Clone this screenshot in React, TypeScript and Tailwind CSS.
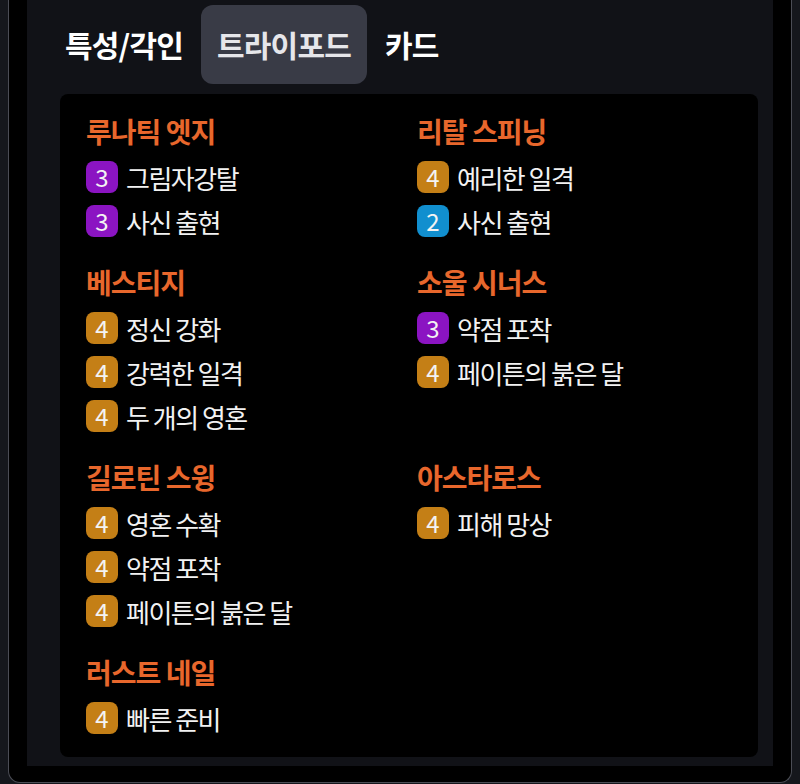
import React from "react";

type Tripod = { level: number; name: string };
type Skill = { name: string; tripods: Tripod[] };

const skills: Skill[] = [
  { name: "루나틱 엣지", tripods: [{ level: 3, name: "그림자강탈" }, { level: 3, name: "사신 출현" }] },
  { name: "리탈 스피닝", tripods: [{ level: 4, name: "예리한 일격" }, { level: 2, name: "사신 출현" }] },
  {
    name: "베스티지",
    tripods: [
      { level: 4, name: "정신 강화" },
      { level: 4, name: "강력한 일격" },
      { level: 4, name: "두 개의 영혼" },
    ],
  },
  { name: "소울 시너스", tripods: [{ level: 3, name: "약점 포착" }, { level: 4, name: "페이튼의 붉은 달" }] },
  {
    name: "길로틴 스윙",
    tripods: [
      { level: 4, name: "영혼 수확" },
      { level: 4, name: "약점 포착" },
      { level: 4, name: "페이튼의 붉은 달" },
    ],
  },
  { name: "아스타로스", tripods: [{ level: 4, name: "피해 망상" }] },
  { name: "러스트 네일", tripods: [{ level: 4, name: "빠른 준비" }] },
];

const levelColor: Record<number, string> = {
  2: "bg-[#118fcf]",
  3: "bg-[#8b14c2]",
  4: "bg-[#c47f16]",
};

const tabs = ["특성/각인", "트라이포드", "카드"];

const SkillBlock = ({ skill }: { skill: Skill }) => (
  <div>
    <h3 className="h-9 mb-[6px] flex items-center text-[28px] font-bold tracking-[-1px] text-[#e8672c]">
      {skill.name}
    </h3>
    {skill.tripods.map((t, i) => (
      <div key={i} className="h-11 flex items-center">
        <span
          className={`${levelColor[t.level]} w-8 h-8 shrink-0 rounded-lg flex items-center justify-center text-[24px] text-[#f3f3f3] mr-2`}
        >
          {t.level}
        </span>
        <span className="text-[26px] tracking-[-1.5px] text-[#f2f2f2]">{t.name}</span>
      </div>
    ))}
  </div>
);

export default function App() {
  return (
    <div className="h-[784px] overflow-hidden bg-[#15171c] px-2 font-['Noto_Sans_CJK_KR','Noto_Sans',sans-serif]">
      <div className="h-[783px] bg-black border border-t-0 border-[#4b4d55] rounded-b-xl px-[18px] pb-4 flex flex-col">
        <div className="flex-1 bg-[#111217] pt-[5px] pl-[22px] pr-[15px] pb-[9px] flex flex-col">
          <div className="flex gap-[2px]">
            {tabs.map((tab) => (
              <button
                key={tab}
                className={`px-4 h-[79px] rounded-xl text-[30px] font-bold tracking-[-0.8px] ${
                  tab === "트라이포드" ? "bg-[#393b46] text-[#e6e6ea]" : "text-white"
                }`}
              >
                {tab}
              </button>
            ))}
          </div>
          <div className="mt-[10px] ml-[11px] flex-1 bg-black rounded-lg pt-[19px] pl-[26px] grid grid-cols-[331px_1fr] gap-y-[21px] content-start">
            {skills.map((s) => (
              <SkillBlock key={s.name} skill={s} />
            ))}
          </div>
        </div>
      </div>
    </div>
  );
}
